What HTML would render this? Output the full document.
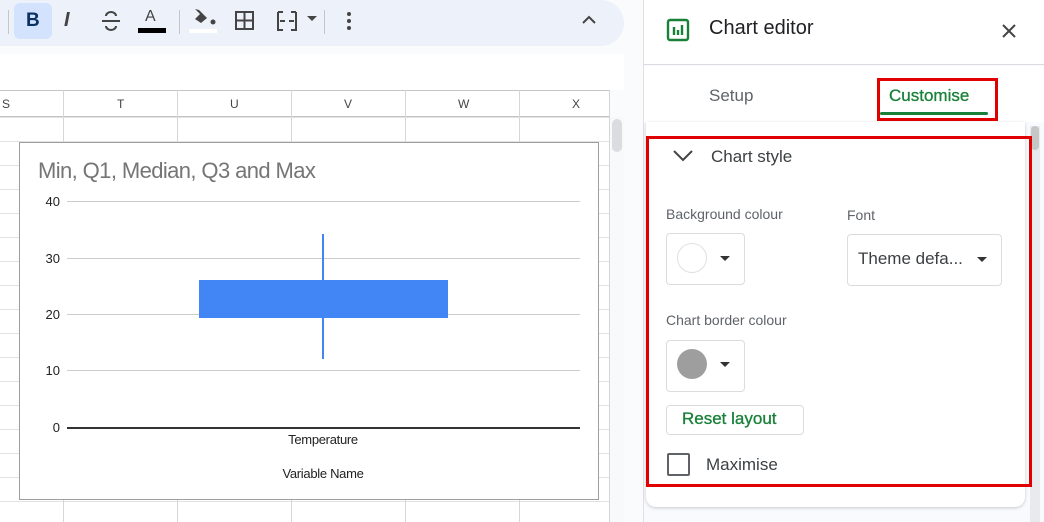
<!DOCTYPE html>
<html><head><style>
*{box-sizing:border-box;margin:0;padding:0}
body{width:1044px;height:522px;overflow:hidden;background:#f9fbfd;font-family:"Liberation Sans",sans-serif;position:relative}
.a{position:absolute}
</style></head><body>
<!-- toolbar -->
<div class="a" style="left:0;top:0;width:624px;height:46px;background:#edf2fa;border-radius:0 24px 24px 0"></div>
<div class="a" style="left:8px;top:10px;width:1px;height:24px;background:#c7c7c7"></div>
<div class="a" style="left:14px;top:3px;width:38px;height:36px;background:#d3e3fd;border-radius:6px"></div>
<div class="a" style="left:26px;top:10px;font-weight:bold;font-size:19px;color:#0b3164">B</div>
<div class="a" style="left:64px;top:9px;font-style:italic;font-size:20px;color:#444;font-weight:bold">I</div>
<svg class="a" style="left:100px;top:9px" width="22" height="24"><path d="M6 7a5 4 0 0 1 10 0M6 17a5 4 0 0 0 10 0M2 12h18" stroke="#444" stroke-width="2" fill="none"/></svg>
<div class="a" style="left:145px;top:8px;font-size:16px;color:#444">A</div>
<div class="a" style="left:138px;top:28px;width:28px;height:5px;background:#000"></div>
<div class="a" style="left:179px;top:10px;width:1px;height:24px;background:#c7c7c7"></div>
<svg class="a" style="left:190px;top:5px" width="28" height="28" viewBox="0 0 28 28"><path d="M5 4l5 5-5 5 6 4 6-5-8-8z" fill="#444"/><circle cx="23" cy="17" r="2.5" fill="#444"/></svg>
<div class="a" style="left:189px;top:29px;width:28px;height:4px;background:#fff"></div>
<svg class="a" style="left:235px;top:11px" width="20" height="20"><rect x="1" y="1" width="17" height="17" fill="none" stroke="#444" stroke-width="2"/><path d="M9.5 1v17M1 9.5h17" stroke="#444" stroke-width="2"/></svg>
<svg class="a" style="left:276px;top:10px" width="22" height="22"><path d="M2 2h5M2 2v18h5M20 2h-5M20 2v18h-5M4 11h5M18 11h-5" stroke="#444" stroke-width="2" fill="none"/></svg>
<div class="a" style="left:307px;top:16px;border:5px solid transparent;border-top:5px solid #444"></div>
<div class="a" style="left:324px;top:10px;width:1px;height:24px;background:#c7c7c7"></div>
<div class="a" style="left:347px;top:12px;width:4px;height:4px;border-radius:2px;background:#444;box-shadow:0 7px 0 #444,0 14px 0 #444"></div>
<svg class="a" style="left:581px;top:14px" width="16" height="12"><path d="M2 9l6-6 6 6" stroke="#444" stroke-width="2" fill="none"/></svg>
<!-- formula area -->
<div class="a" style="left:0;top:54px;width:624px;height:36px;background:#fff"></div>
<!-- sheet -->
<div class="a" style="left:0;top:90px;width:610px;height:432px;background:#fff;
background-image:linear-gradient(#e2e2e2 1px,transparent 1px);background-size:100% 24px;background-position:0 27px"></div>
<div class="a" style="left:0;top:90px;width:610px;height:27px;background:#fff;border-top:1px solid #c4c4c4;border-bottom:1px solid #c4c4c4"></div>
<div class="a" style="left:63px;top:90px;width:1px;height:432px;background:#d6d6d6"></div>
<div class="a" style="left:177px;top:90px;width:1px;height:432px;background:#d6d6d6"></div>
<div class="a" style="left:291px;top:90px;width:1px;height:432px;background:#d6d6d6"></div>
<div class="a" style="left:405px;top:90px;width:1px;height:432px;background:#d6d6d6"></div>
<div class="a" style="left:519px;top:90px;width:1px;height:432px;background:#d6d6d6"></div>
<div class="a" style="left:609px;top:90px;width:1px;height:432px;background:#d6d6d6"></div>
<div class="a" style="top:97px;left:2px;font-size:12px;color:#444">S</div>
<div class="a" style="top:97px;left:117px;font-size:12px;color:#444">T</div>
<div class="a" style="top:97px;left:230px;font-size:12px;color:#444">U</div>
<div class="a" style="top:97px;left:344px;font-size:12px;color:#444">V</div>
<div class="a" style="top:97px;left:458px;font-size:12px;color:#444">W</div>
<div class="a" style="top:97px;left:572px;font-size:12px;color:#444">X</div>
<div class="a" style="left:610px;top:117px;width:14px;height:405px;background:#f8f9fa"></div>
<div class="a" style="left:612px;top:119px;width:10px;height:33px;background:#dadce0;border-radius:5px"></div>
<!-- chart -->
<div class="a" style="left:19px;top:142px;width:580px;height:358px;background:#fff;border:1px solid #9e9e9e"></div>
<div class="a" style="left:38px;top:158px;font-size:22px;color:#757575;letter-spacing:-0.6px">Min, Q1, Median, Q3 and Max</div>
<div class="a" style="left:67px;top:201px;width:513px;height:1px;background:#ccc"></div>
<div class="a" style="left:67px;top:258px;width:513px;height:1px;background:#ccc"></div>
<div class="a" style="left:67px;top:314px;width:513px;height:1px;background:#ccc"></div>
<div class="a" style="left:67px;top:370px;width:513px;height:1px;background:#ccc"></div>
<div class="a" style="left:67px;top:427px;width:513px;height:2px;background:#333"></div>
<div class="a" style="left:36px;top:194px;font-size:13px;color:#222;width:24px;text-align:right">40</div>
<div class="a" style="left:36px;top:251px;font-size:13px;color:#222;width:24px;text-align:right">30</div>
<div class="a" style="left:36px;top:307px;font-size:13px;color:#222;width:24px;text-align:right">20</div>
<div class="a" style="left:36px;top:363px;font-size:13px;color:#222;width:24px;text-align:right">10</div>
<div class="a" style="left:36px;top:420px;font-size:13px;color:#222;width:24px;text-align:right">0</div>
<div class="a" style="left:322px;top:234px;width:2px;height:125px;background:#4285f4"></div>
<div class="a" style="left:199px;top:280px;width:249px;height:38px;background:#4285f4"></div>
<div class="a" style="left:223px;top:432px;width:200px;text-align:center;font-size:13px;color:#222;letter-spacing:-0.3px">Temperature</div>
<div class="a" style="left:223px;top:466px;width:200px;text-align:center;font-size:13px;color:#222;letter-spacing:-0.3px">Variable Name</div>
<!-- panel -->
<div class="a" style="left:643px;top:0;width:401px;height:522px;background:#f8fafd;border-left:1px solid #e0e0e0"></div>
<div class="a" style="left:644px;top:0;width:400px;height:65px;background:#fff;border-bottom:1px solid #dadce0"></div>
<svg class="a" style="left:666px;top:18px" width="24" height="24"><rect x="2" y="2" width="20" height="20" rx="2" fill="none" stroke="#188038" stroke-width="2.4"/><path d="M8 9v8M12 12v5M16 7v10" stroke="#188038" stroke-width="2.4"/></svg>
<div class="a" style="left:709px;top:17px;font-size:20px;color:#202124">Chart editor</div>
<svg class="a" style="left:1002px;top:24px" width="14" height="14"><path d="M1 1l12 12M13 1L1 13" stroke="#444" stroke-width="2"/></svg>
<div class="a" style="left:644px;top:66px;width:400px;height:56px;background:#fff"></div>
<div class="a" style="left:709px;top:86px;font-size:17px;color:#5f6368">Setup</div>
<div class="a" style="left:889px;top:86px;font-size:17px;color:#188038;-webkit-text-stroke:0.3px #188038">Customise</div>
<div class="a" style="left:880px;top:112px;width:108px;height:3px;background:#188038;border-radius:2px"></div>
<div class="a" style="left:877px;top:78px;width:121px;height:43px;border:3px solid #e00000"></div>
<!-- card -->
<div class="a" style="left:646px;top:122px;width:379px;height:385px;background:#fff;border-radius:0 0 10px 10px;box-shadow:0 1px 3px rgba(0,0,0,.2)"></div>
<div class="a" style="left:1030px;top:126px;width:10px;height:396px;background:#e8eaed"></div>
<div class="a" style="left:1031px;top:126px;width:8px;height:24px;background:#c4c7c5;border-radius:4px"></div>
<svg class="a" style="left:672px;top:148px" width="22" height="14"><path d="M2 3l9 9 9-9" stroke="#444" stroke-width="2" fill="none"/></svg>
<div class="a" style="left:711px;top:147px;font-size:17px;color:#3c4043">Chart style</div>
<div class="a" style="left:666px;top:206px;font-size:14px;color:#5f6368">Background colour</div>
<div class="a" style="left:847px;top:207px;font-size:14px;color:#5f6368">Font</div>
<div class="a" style="left:666px;top:233px;width:79px;height:52px;border:1px solid #dadce0;border-radius:4px;background:#fff"></div>
<div class="a" style="left:677px;top:243px;width:30px;height:30px;border-radius:50%;border:1px solid #e0e0e0"></div>
<div class="a" style="left:720px;top:256px;border:5px solid transparent;border-top:5px solid #333"></div>
<div class="a" style="left:847px;top:234px;width:155px;height:52px;border:1px solid #dadce0;border-radius:4px;background:#fff"></div>
<div class="a" style="left:858px;top:249px;font-size:17px;color:#3c4043">Theme defa...</div>
<div class="a" style="left:977px;top:257px;border:5px solid transparent;border-top:5px solid #333"></div>
<div class="a" style="left:666px;top:312px;font-size:14px;color:#5f6368">Chart border colour</div>
<div class="a" style="left:666px;top:340px;width:79px;height:52px;border:1px solid #dadce0;border-radius:4px;background:#fff"></div>
<div class="a" style="left:677px;top:349px;width:30px;height:30px;border-radius:50%;background:#9e9e9e"></div>
<div class="a" style="left:720px;top:362px;border:5px solid transparent;border-top:5px solid #333"></div>
<div class="a" style="left:666px;top:405px;width:138px;height:30px;border:1px solid #dadce0;border-radius:4px;background:#fff"></div>
<div class="a" style="left:682px;top:409px;font-size:17px;color:#188038;-webkit-text-stroke:0.3px #188038">Reset layout</div>
<div class="a" style="left:667px;top:453px;width:23px;height:23px;border:2px solid #5f6368;border-radius:2px"></div>
<div class="a" style="left:706px;top:455px;font-size:17px;color:#3c4043">Maximise</div>
<div class="a" style="left:646px;top:136px;width:386px;height:351px;border:3px solid #e00000"></div>
</body></html>
